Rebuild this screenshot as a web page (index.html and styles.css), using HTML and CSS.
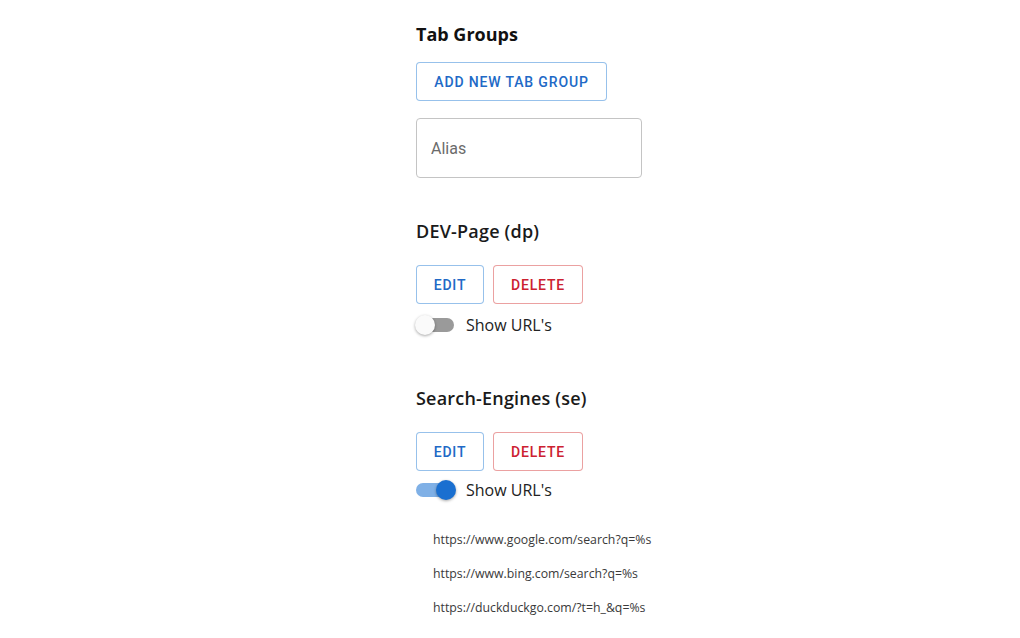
FILE: index.html
```html
<!DOCTYPE html>
<html lang="en">
<head>
    <meta charset="UTF-8">
    <meta name="viewport" content="width=device-width, initial-scale=1.0">
    <title>Tab Groups</title>
    <link rel="stylesheet" href="styles.css">
</head>
<body>
    <div class="page">
        <h2 class="page-title">Tab Groups</h2>
        <button class="btn btn-primary btn-add">Add new tab group</button>
        <input class="alias-input" type="text" placeholder="Alias">

        <!-- Tab group list -->
        <div class="group">
            <h3 class="group-title">DEV-Page (dp)</h3>
            <div class="group-actions">
                <button class="btn btn-primary">Edit</button>
                <button class="btn btn-danger">Delete</button>
            </div>
            <label class="switch-row">
                <span class="switch"><span class="switch-thumb"></span></span>
                Show URL's
            </label>
        </div>

        <div class="group">
            <h3 class="group-title">Search-Engines (se)</h3>
            <div class="group-actions">
                <button class="btn btn-primary">Edit</button>
                <button class="btn btn-danger">Delete</button>
            </div>
            <label class="switch-row">
                <span class="switch on"><span class="switch-thumb"></span></span>
                Show URL's
            </label>
            <ul class="url-list">
                <li>https://www.google.com/search?q=%s</li>
                <li>https://www.bing.com/search?q=%s</li>
                <li>https://duckduckgo.com/?t=h_&amp;q=%s</li>
            </ul>
        </div>
    </div>
</body>
</html>
```

FILE: styles.css
```css
body {
    margin: 0;
    padding: 0;
    background-color: #fff;
    font-family: "Open Sans", "Noto Sans", sans-serif;
    color: #1f1f1f;
}

.page {
    display: flex;
    flex-direction: column;
    align-items: flex-start;
    padding: 22px 0 0 416px;
}

.page-title {
    margin: 0;
    font-size: 18px;
    line-height: 24px;
    font-weight: 700;
    color: #111;
}

/* Outlined buttons */
.btn {
    font-family: Roboto, sans-serif;
    font-weight: 500;
    font-size: 14px;
    letter-spacing: 0.85px;
    text-transform: uppercase;
    background: #fff;
    height: 39px;
    padding: 0 14px;
    border-radius: 4px;
    cursor: pointer;
}

.btn-primary {
    color: #2169c6;
    border: 1px solid rgba(25, 118, 210, 0.45);
}

.btn-danger {
    color: #cc2130;
    border: 1px solid rgba(211, 47, 47, 0.45);
    width: 90px;
}

.btn-add {
    margin-top: 16px;
    width: 191px;
}

.alias-input {
    margin-top: 17px;
    width: 226px;
    height: 60px;
    box-sizing: border-box;
    padding: 0 14px;
    border: 1px solid #c4c4c4;
    border-radius: 4px;
    font-family: Roboto, sans-serif;
    font-size: 16px;
    outline: none;
}

.alias-input::placeholder {
    color: #6b6b6b;
}

.group {
    display: flex;
    flex-direction: column;
    align-items: flex-start;
    margin-top: 41px;
}

.group + .group {
    margin-top: 49px;
}

.group-title {
    margin: 0;
    font-size: 18px;
    line-height: 24px;
    font-weight: 600;
    letter-spacing: 0.2px;
    color: #1a1a1a;
}

.group-actions {
    display: flex;
    gap: 9px;
    margin-top: 22px;
}

.group-actions .btn-primary {
    width: 68px;
}

/* Show URL's toggle */
.switch-row {
    display: flex;
    align-items: center;
    gap: 12px;
    height: 24px;
    margin-top: 9px;
    font-size: 16px;
    color: #222;
}

.group + .group .switch-row {
    margin-top: 7px;
}

.switch {
    position: relative;
    width: 38px;
    height: 14px;
    border-radius: 7px;
    background-color: #9a9a9a;
}

.switch-thumb {
    position: absolute;
    top: -3px;
    left: -1px;
    width: 20px;
    height: 20px;
    border-radius: 50%;
    background-color: #fafafa;
    box-shadow: 0 1px 3px rgba(0, 0, 0, 0.35);
}

.switch.on {
    background-color: #7fb0e6;
}

.switch.on .switch-thumb {
    left: 20px;
    background-color: #1a6fd0;
}

.url-list {
    list-style: none;
    margin: 29px 0 0;
    padding: 0 0 0 17px;
    font-size: 12.3px;
    color: #3a3a3a;
}

.url-list li {
    line-height: 17px;
    margin-bottom: 17px;
}
```
